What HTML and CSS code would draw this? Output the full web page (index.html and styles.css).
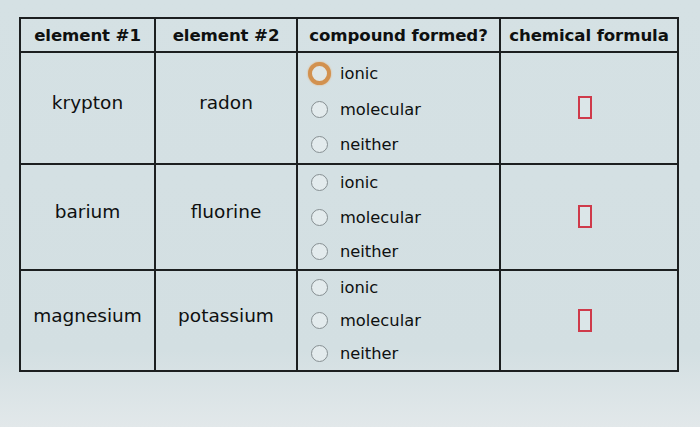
FILE: index.html
```html
<!DOCTYPE html>
<html>
<head>
<meta charset="utf-8">
<link rel="stylesheet" href="styles.css">
</head>
<body>
<div class="page">
  <table class="grid">
    <colgroup>
      <col class="c1"><col class="c2"><col class="c3"><col class="c4">
    </colgroup>
    <thead>
      <tr>
        <th>element #1</th>
        <th>element #2</th>
        <th>compound formed?</th>
        <th>chemical formula</th>
      </tr>
    </thead>
    <tbody>
      <tr class="r1">
        <td class="el">krypton</td>
        <td class="el">radon</td>
        <td class="opts">
          <div class="opt"><span class="radio focus"></span>ionic</div>
          <div class="opt"><span class="radio"></span>molecular</div>
          <div class="opt"><span class="radio"></span>neither</div>
        </td>
        <td class="formula"><span class="box"></span></td>
      </tr>
      <tr class="r2">
        <td class="el">barium</td>
        <td class="el">fluorine</td>
        <td class="opts">
          <div class="opt"><span class="radio"></span>ionic</div>
          <div class="opt"><span class="radio"></span>molecular</div>
          <div class="opt"><span class="radio"></span>neither</div>
        </td>
        <td class="formula"><span class="box"></span></td>
      </tr>
      <tr class="r3">
        <td class="el">magnesium</td>
        <td class="el">potassium</td>
        <td class="opts">
          <div class="opt"><span class="radio"></span>ionic</div>
          <div class="opt"><span class="radio"></span>molecular</div>
          <div class="opt"><span class="radio"></span>neither</div>
        </td>
        <td class="formula"><span class="box"></span></td>
      </tr>
    </tbody>
  </table>
</div>
</body>
</html>
```

FILE: styles.css
```css
html, body {
  margin: 0;
  padding: 0;
}
body {
  width: 700px;
  height: 427px;
  overflow: hidden;
  background: linear-gradient(180deg, #d5e1e4 0%, #d3dfe2 82%, #e2e8ea 100%);
  font-family: "DejaVu Sans", Verdana, sans-serif;
  color: #0e1010;
}
.page {
  padding: 17px 0 0 19px;
}
.grid {
  border-collapse: collapse;
  width: 658px;
  table-layout: fixed;
}
.c1 { width: 135px; }
.c2 { width: 142px; }
.c3 { width: 203px; }
.c4 { width: 178px; }
.grid th, .grid td {
  border: 2px solid #1c1f20;
  padding: 0;
}
.grid th {
  height: 32px;
  font-size: 16.6px;
  font-weight: bold;
  text-align: center;
  white-space: nowrap;
  letter-spacing: -0.1px;
}
.el {
  text-align: center;
  vertical-align: middle;
  font-size: 18.5px;
  padding-bottom: 10px !important;
}
.opts {
  vertical-align: top;
  padding-left: 13px !important;
}
.r1 .opts { padding-top: 3px !important; }
.r2 .opts { padding-top: 1px !important; }
.r3 .opts { padding-top: 0 !important; }
.opt {
  display: flex;
  align-items: center;
  gap: 12px;
  height: 35.5px;
  font-size: 16.3px;
}
.r2 .opt { height: 34.5px; }
.r3 .opt { height: 33px; }
.radio {
  width: 17px;
  height: 17px;
  border-radius: 50%;
  border: 1px solid #868f92;
  background: #e3ebed;
  box-sizing: border-box;
  flex: none;
}
.radio.focus {
  border: 4px solid #d2914f;
  width: 23px;
  height: 23px;
  margin-left: -3px;
  margin-right: -3px;
  background: #dfe6e6;
  box-shadow: 0 0 2px #e6a868;
}
.formula {
  text-align: center;
  vertical-align: middle;
}
.box {
  display: inline-block;
  width: 10px;
  height: 19px;
  border: 2px solid #cf3a4a;
  background: #dbe6e8;
  vertical-align: middle;
  position: relative;
  left: -4px;
}
```
